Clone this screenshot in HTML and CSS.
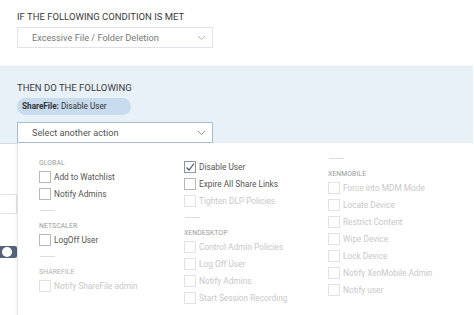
FILE: index.html
```html
<!DOCTYPE html>
<html lang="en">
<head>
    <meta charset="UTF-8">
    <meta name="viewport" content="width=device-width, initial-scale=1.0">
    <title>Policy Rule</title>
    <link rel="stylesheet" href="styles.css">
</head>
<body>
    <div class="page">
        <div class="section condition">
            <h3 class="section-title">IF THE FOLLOWING CONDITION IS MET</h3>
            <div class="select">
                <span>Excessive File / Folder Deletion</span>
                <svg class="chevron" width="9" height="6" viewBox="0 0 9 6"><path d="M1 1 L4.5 4.5 L8 1" fill="none" stroke="#b5bcc6" stroke-width="1"/></svg>
            </div>
        </div>

        <div class="section actions">
            <h3 class="section-title">THEN DO THE FOLLOWING</h3>
            <div class="pill"><strong>ShareFile:</strong> Disable User</div>
            <div class="select-wrap">
                <div class="select select-open">
                    <span>Select another action</span>
                    <svg class="chevron" width="9" height="6" viewBox="0 0 9 6"><path d="M1 1 L4.5 4.5 L8 1" fill="none" stroke="#8f9bab" stroke-width="1"/></svg>
                </div>

                <div class="dropdown">
                    <div class="column">
                        <div class="group-title">GLOBAL</div>
                        <label class="option"><span class="box"></span>Add to Watchlist</label>
                        <label class="option"><span class="box"></span>Notify Admins</label>
                        <div class="divider"></div>
                        <div class="group-title">NETSCALER</div>
                        <label class="option"><span class="box"></span>LogOff User</label>
                        <div class="divider"></div>
                        <div class="group-title disabled">SHAREFILE</div>
                        <label class="option disabled"><span class="box"></span>Notify ShareFile admin</label>
                    </div>
                    <div class="column column-next">
                        <label class="option"><span class="box checked"><svg width="10" height="10" viewBox="0 0 10 10"><path d="M1.5 5.5 L4 8 L9 1.5" fill="none" stroke="#4d5868" stroke-width="1.2"/></svg></span>Disable User</label>
                        <label class="option"><span class="box"></span>Expire All Share Links</label>
                        <label class="option disabled"><span class="box"></span>Tighten DLP Policies</label>
                        <div class="divider"></div>
                        <div class="group-title">XENDESKTOP</div>
                        <label class="option disabled"><span class="box"></span>Control Admin Policies</label>
                        <label class="option disabled"><span class="box"></span>Log Off User</label>
                        <label class="option disabled"><span class="box"></span>Notify Admins</label>
                        <label class="option disabled"><span class="box"></span>Start Session Recording</label>
                    </div>
                    <div class="column column-next">
                        <div class="divider divider-top"></div>
                        <div class="group-title">XENMOBILE</div>
                        <label class="option disabled"><span class="box"></span>Force into MDM Mode</label>
                        <label class="option disabled"><span class="box"></span>Locate Device</label>
                        <label class="option disabled"><span class="box"></span>Restrict Content</label>
                        <label class="option disabled"><span class="box"></span>Wipe Device</label>
                        <label class="option disabled"><span class="box"></span>Lock Device</label>
                        <label class="option disabled"><span class="box"></span>Notify XenMobile Admin</label>
                        <label class="option disabled"><span class="box"></span>Notify user</label>
                    </div>
                </div>
            </div>
        </div>

        <div class="below">
            <div class="below-input"></div>
            <div class="toggle"><span class="knob"></span></div>
        </div>
    </div>
</body>
</html>
```

FILE: styles.css
```css
* {
    margin: 0;
    padding: 0;
    box-sizing: border-box;
}

body {
    font-family: Roboto, 'Open Sans', sans-serif;
    background: #ffffff;
    color: #555;
    width: 474px;
    height: 315px;
    overflow: hidden;
}

.page {
    width: 474px;
}

.section {
    padding: 0 17px;
}

.condition {
    padding-top: 11px;
    padding-bottom: 18px;
}

.actions {
    background: #e8f0f8;
    border-top: 1px solid #e2eaf3;
    border-bottom: 1px solid #d6dbe1;
    padding-top: 15px;
    margin-right: 1px;
}

.section-title {
    font-size: 9.5px;
    line-height: 12px;
    font-weight: 400;
    color: #3a3a3a;
    margin-bottom: 4px;
}

.select {
    width: 196px;
    height: 21px;
    background: #fff;
    border: 1px solid #e0e3e7;
    display: flex;
    align-items: center;
    justify-content: space-between;
    padding: 0 6px 0 14px;
    font-size: 9.2px;
    color: #777;
}

.select-open {
    border-color: #a9bbcf;
    color: #555;
}

.chevron {
    display: block;
}

.pill {
    width: max-content;
    margin-top: 1px;
    height: 17px;
    line-height: 17px;
    padding: 0 24px 0 5px;
    border-radius: 9px;
    background: #c7daee;
    font-size: 8.2px;
    color: #333;
}

.pill strong {
    font-weight: 700;
}

.select-wrap {
    position: relative;
    margin-top: 7px;
}

.dropdown {
    position: absolute;
    top: 21px;
    left: 0;
    width: 470px;
    height: 200px;
    background: #fff;
    border-left: 1px solid #e1e4e8;
    box-shadow: 0 2px 4px rgba(0, 0, 0, 0.08);
    padding: 13px 0 0 21px;
    display: grid;
    grid-template-columns: 145px 144px 1fr;
    z-index: 2;
}

.column-next {
    padding-top: 2px;
}

.group-title {
    font-size: 6.8px;
    line-height: 9px;
    padding-top: 3px;
    color: #9a9a9a;
    letter-spacing: 0.1px;
}

.group-title.disabled {
    color: #b0b0b0;
}

.option {
    display: flex;
    align-items: center;
    gap: 3px;
    height: 17px;
    font-size: 8.3px;
    color: #555;
}

.option.disabled {
    color: #c8c8c8;
}

.box {
    width: 12px;
    height: 12px;
    border: 1px solid #b8b8b8;
    background: #fff;
    display: flex;
    align-items: center;
    justify-content: center;
    flex-shrink: 0;
}

.option.disabled .box {
    border-color: #e2e2e2;
}

.box.checked {
    border-color: #8c96a4;
}

.divider {
    width: 15px;
    height: 1px;
    background: #dddddd;
    margin: 8px 0 8px 1px;
}

.divider-top {
    margin-top: 0;
}

.below {
    padding-top: 50px;
}

.below-input {
    width: 17px;
    height: 20px;
    border: 1px solid #e0e3e7;
    border-left: none;
}

.toggle {
    margin-top: 32px;
    width: 17px;
    height: 12px;
    background: #56627a;
    border-radius: 0 2px 2px 0;
    position: relative;
}

.knob {
    position: absolute;
    left: 2px;
    top: 1px;
    width: 10px;
    height: 10px;
    border-radius: 50%;
    background: #fff;
}
```
